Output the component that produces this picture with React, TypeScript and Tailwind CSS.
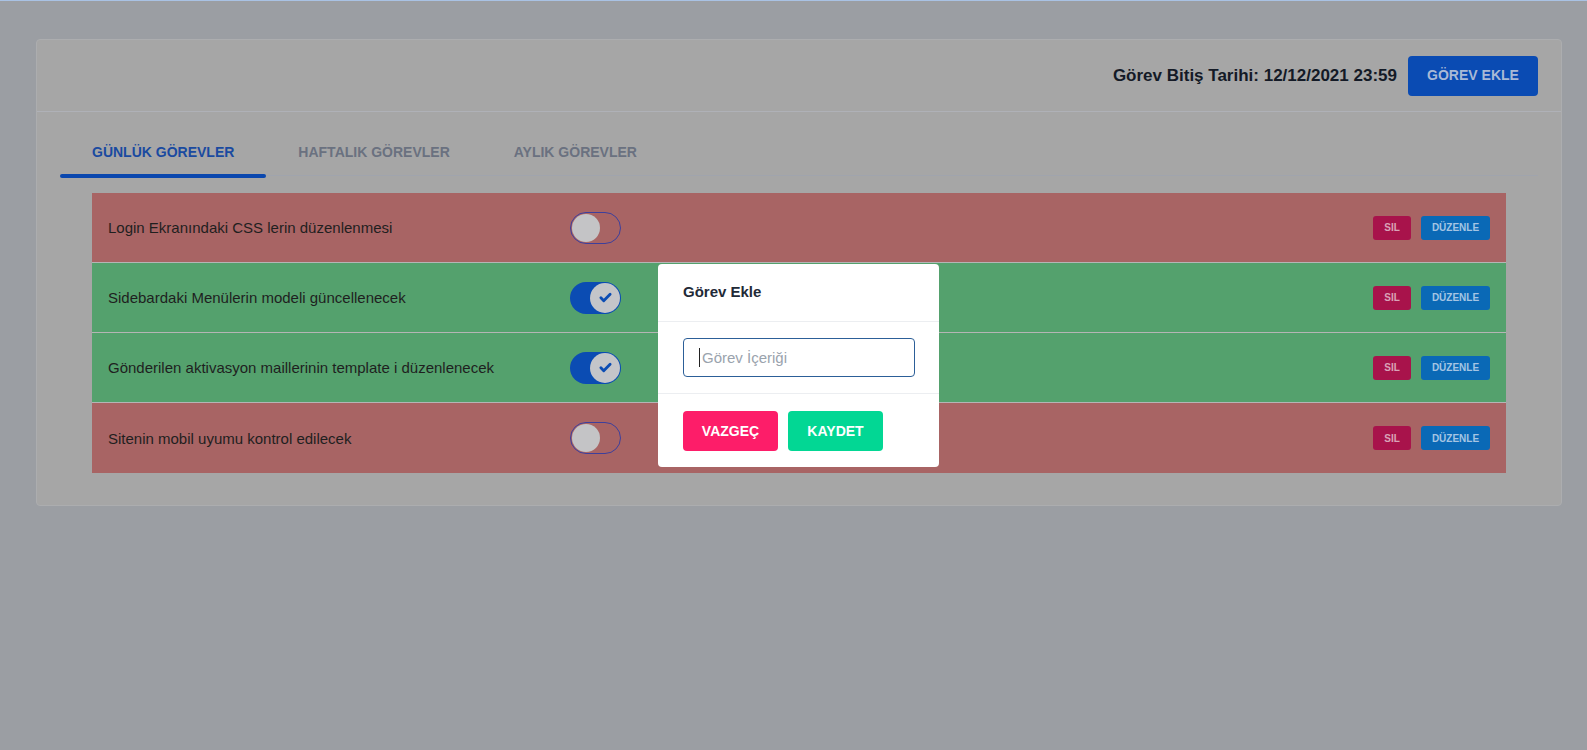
import React from "react";

type Task = { text: string; done: boolean };

const tasks: Task[] = [
  { text: "Login Ekranındaki CSS lerin düzenlenmesi", done: false },
  { text: "Sidebardaki Menülerin modeli güncellenecek", done: true },
  { text: "Gönderilen aktivasyon maillerinin template i düzenlenecek", done: true },
  { text: "Sitenin mobil uyumu kontrol edilecek", done: false },
];

function Toggle({ on }: { on: boolean }) {
  if (on) {
    return (
      <div className="flex h-[32px] w-[51px] items-center justify-end rounded-full bg-[#0b4cb3] pr-[1px]">
        <div className="flex h-[30px] w-[30px] items-center justify-center rounded-full bg-[#c4c5c9]">
          <svg width="17" height="17" viewBox="0 0 24 24" fill="none">
            <path d="M5.5 12.5l4 4L18.5 7.5" stroke="#0b4cb3" strokeWidth="4" strokeLinecap="round" strokeLinejoin="round" />
          </svg>
        </div>
      </div>
    );
  }
  return (
    <div className="flex h-[32px] w-[51px] items-center rounded-full border-[1.5px] border-[#3d3f9c] pl-[1px]">
      <div className="h-[28px] w-[28px] rounded-full bg-[#c4c4c6]" />
    </div>
  );
}

export default function App() {
  return (
    <div className="min-h-[750px] bg-[#9b9ea3] font-['Liberation_Sans',Arial,sans-serif]">
      <div className="h-px bg-[#a9c2e4]" />
      <div className="pl-[36px] pr-[25px] pt-[38px]">
        <div className="rounded-[4px] border border-[#acadaf] bg-[#a6a6a6]">
          <div className="flex h-[72px] items-center justify-end gap-[11px] border-b border-[#afb1b7] pr-[23px]">
            <span className="text-[17px] font-bold text-[#141a26]">Görev Bitiş Tarihi: 12/12/2021 23:59</span>
            <button className="h-[40px] w-[130px] rounded-[4px] bg-[#0a4bb3] text-[14px] font-bold text-[#a9b9d6]">
              GÖREV EKLE
            </button>
          </div>
          <div className="px-[23px] pb-[32px] pt-[18px]">
            <div className="flex border-b border-[#a0a4ad]">
              <div className="-mb-[3px] flex flex-col">
                <div className="flex h-[44px] items-center px-[32px] text-[14px] font-bold text-[#1a4aa0]">GÜNLÜK GÖREVLER</div>
                <div className="h-[4px] rounded-full bg-[#0a47ae]" />
              </div>
              <div className="flex h-[44px] items-center px-[32px] text-[14px] font-bold text-[#6a7180]">HAFTALIK GÖREVLER</div>
              <div className="flex h-[44px] items-center px-[32px] text-[14px] font-bold text-[#6a7180]">AYLIK GÖREVLER</div>
            </div>
            <div className="mx-[32px] mt-[17px]">
              {tasks.map((t, i) => (
                <div
                  key={i}
                  className={
                    "flex h-[70px] items-center " +
                    (i < tasks.length - 1 ? "border-b border-[#b5b5b5] " : "") +
                    (t.done ? "bg-[#54a16d]" : "bg-[#a86464]")
                  }
                >
                  <div className="w-[478px] pl-[16px] pt-[2px] text-[15px] text-[#1f1f1f]">{t.text}</div>
                  <Toggle on={t.done} />
                  <div className="flex flex-1 items-center justify-end gap-[10px] pr-[16px]">
                    <button className="h-[24px] w-[38px] rounded-[3px] bg-[#a8134b] text-[10px] font-bold text-[#d9a3b7]">SIL</button>
                    <button className="h-[24px] w-[69px] rounded-[3px] bg-[#0a69b6] text-[10px] font-bold text-[#a5c5e3]">DÜZENLE</button>
                  </div>
                </div>
              ))}
            </div>
          </div>
        </div>
      </div>

      <div className="fixed left-[658px] top-[264px] w-[281px] rounded-[4px] bg-white">
        <div className="flex h-[58px] items-center border-b border-[#eceef1] pl-[25px] text-[15px] font-bold text-[#1f2a37]">
          Görev Ekle
        </div>
        <div className="border-b border-[#eceef1] px-[25px] pb-[16px] pt-[16px]">
          <div className="relative">
            <input
              className="h-[39px] w-[232px] rounded-[4px] border border-[#2c5f98] pl-[18px] text-[15px] text-[#333] outline-none placeholder:text-[#9aa3ad]"
              placeholder="Görev İçeriği"
            />
            <span className="absolute left-[16px] top-[10px] h-[19px] w-px bg-[#222]" />
          </div>
        </div>
        <div className="flex gap-[10px] px-[25px] pb-[16px] pt-[17px]">
          <button className="h-[40px] w-[95px] rounded-[4px] bg-[#fd1d69] text-[14px] font-bold text-white">VAZGEÇ</button>
          <button className="h-[40px] w-[95px] rounded-[4px] bg-[#02d794] text-[14px] font-bold text-white">KAYDET</button>
        </div>
      </div>
    </div>
  );
}
